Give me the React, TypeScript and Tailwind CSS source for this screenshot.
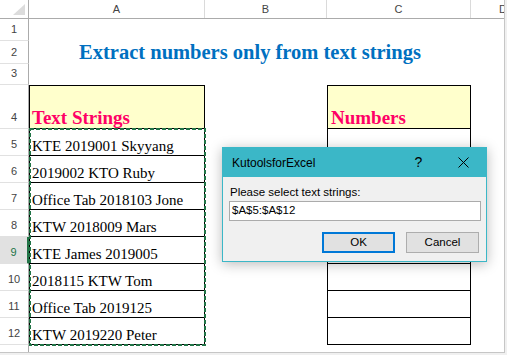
import React from 'react';

const ui = "font-['Liberation_Sans',Arial,sans-serif]";
const serif = "font-['Liberation_Serif','Times_New_Roman',serif]";

const data = [
  { n: 5, text: 'KTE 2019001 Skyyang' },
  { n: 6, text: '2019002 KTO Ruby' },
  { n: 7, text: 'Office Tab 2018103 Jone' },
  { n: 8, text: 'KTW 2018009 Mars' },
  { n: 9, text: 'KTE James 2019005' },
  { n: 10, text: '2018115 KTW Tom' },
  { n: 11, text: 'Office Tab 2019125' },
  { n: 12, text: 'KTW 2019220 Peter' },
];

function RowHead({ n, active = false }: { n: number; active?: boolean }) {
  return (
    <div
      className={`w-[29px] h-full shrink-0 flex items-end justify-center pb-[3px] border-b border-b-[#e1e1e1] text-[11px] ${ui} ${
        active
          ? 'bg-[#e1e1e1] text-[#217346] border-r-2 border-r-[#217346]'
          : 'text-[#444] border-r border-r-[#ababab]'
      }`}
    >
      {n}
    </div>
  );
}

function ColHead({ label, w }: { label: string; w: string }) {
  return (
    <div className={`${w} shrink-0 h-full flex items-center justify-center border-r border-[#dadada] text-[11px] text-[#444] ${ui}`}>
      {label}
    </div>
  );
}

function Dialog() {
  return (
    <div className={`absolute left-[222px] top-[147px] w-[265px] h-[115px] border border-[#3bb7c7] bg-[#f0f0f0] shadow-[0_2px_12px_rgba(0,0,0,0.28)] ${ui}`}>
      <div className="h-[29px] bg-[#3bb7c7] flex items-center">
        <span className="pl-[9px] text-[12px] text-black">KutoolsforExcel</span>
        <div className="ml-auto flex h-full">
          <div className="w-[45px] flex items-center justify-center text-[14px] text-black">?</div>
          <div className="w-[45px] flex items-center justify-center">
            <svg width="11" height="11" viewBox="0 0 11 11">
              <path d="M0.5 0.5 L10.5 10.5 M10.5 0.5 L0.5 10.5" stroke="#000" strokeWidth="1" fill="none" />
            </svg>
          </div>
        </div>
      </div>
      <div className="pl-[6px] pr-[5px] pt-[8px]">
        <div className="pl-[1px] text-[11.5px] leading-[15px] text-black">Please select text strings:</div>
        <div className="mt-[1px] h-[20px] border border-[#ababab] bg-white flex items-center px-[2px] text-[11.5px] text-black">
          $A$5:$A$12
        </div>
        <div className="mt-[11px] mr-[2px] flex justify-end gap-[11px]">
          <button className="w-[73px] h-[21px] border-2 border-[#0078d7] bg-[#e1e1e1] text-[11.5px] text-black flex items-center justify-center">
            OK
          </button>
          <button className="w-[73px] h-[21px] border border-[#adadad] bg-[#e1e1e1] text-[11.5px] text-black flex items-center justify-center">
            Cancel
          </button>
        </div>
      </div>
    </div>
  );
}

export default function App() {
  return (
    <div className="w-[507px] h-[355px] bg-[#f0f0f0]">
      <div className="relative w-[505px] h-[353px] overflow-hidden bg-white border-r border-b border-[#c6c6c6]">
        {/* column headers */}
        <div className="flex h-[19px] border-b border-[#ababab]">
          <div className="w-[29px] shrink-0 h-full border-r border-[#ababab] flex items-end justify-end pr-[3px] pb-[3px]">
            <svg width="12" height="11" viewBox="0 0 12 11">
              <polygon points="0,11 12,11 12,0" fill="#dcdcdc" />
            </svg>
          </div>
          <ColHead label="A" w="w-[176px]" />
          <ColHead label="B" w="w-[122px]" />
          <ColHead label="C" w="w-[144px]" />
          <ColHead label="D" w="w-[65px]" />
        </div>

        {/* row 1 */}
        <div className="flex h-[22px]">
          <RowHead n={1} />
        </div>

        {/* row 2 - title */}
        <div className="flex h-[23px]">
          <RowHead n={2} />
          <div className={`w-[442px] flex items-end justify-center text-[20.5px] leading-[23px] font-bold text-[#0070c0] whitespace-nowrap ${serif}`}>
            Extract numbers only from text strings
          </div>
        </div>

        {/* row 3 */}
        <div className="flex h-[21px]">
          <RowHead n={3} />
        </div>

        {/* row 4 - headers */}
        <div className="flex h-[44px]">
          <RowHead n={4} />
          <div className={`w-[176px] h-full border border-black bg-[#ffffcc] flex items-end pl-[2px] text-[19px] leading-[21px] font-bold text-[#ff0066] ${serif}`}>
            Text Strings
          </div>
          <div className="w-[122px]" />
          <div className={`w-[144px] h-full border border-black bg-[#ffffcc] flex items-end pl-[3px] text-[19px] leading-[21px] font-bold text-[#ff0066] ${serif}`}>
            Numbers
          </div>
        </div>

        {/* rows 5-12 */}
        <div className="relative">
          {data.map((r) => (
            <div key={r.n} className="flex h-[27px]">
              <RowHead n={r.n} active={r.n === 9} />
              <div className={`w-[176px] h-full border-x border-b border-black flex items-end pl-[2px] text-[15px] leading-[17px] text-black whitespace-nowrap ${serif}`}>
                {r.text}
              </div>
              <div className="w-[122px]" />
              <div className="w-[144px] h-full border-x border-b border-black" />
            </div>
          ))}
          {/* copy marquee */}
          <svg className="absolute left-[29px] top-[-1px] pointer-events-none" width="177" height="218" viewBox="0 0 177 218">
            <rect x="1" y="1" width="175" height="216" fill="none" stroke="#217346" strokeWidth="2" strokeDasharray="4 2" />
          </svg>
        </div>

        {/* row 13 */}
        <div className="flex h-[27px]">
          <RowHead n={13} />
        </div>

        <Dialog />
      </div>
    </div>
  );
}
